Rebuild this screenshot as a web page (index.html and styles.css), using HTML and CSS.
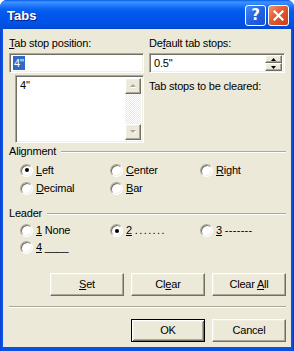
FILE: index.html
```html
<!DOCTYPE html>
<html>
<head>
<meta charset="utf-8">
<link rel="stylesheet" href="styles.css">
</head>
<body>
<div class="window">
  <div class="titlebar">
    <span class="title">Tabs</span>
    <div class="tb-buttons">
      <div class="tb-btn help">?</div>
      <div class="tb-btn close">
        <svg width="11" height="11" viewBox="0 0 11 11"><path d="M1.5 1.5 L9.5 9.5 M9.5 1.5 L1.5 9.5" stroke="#fff" stroke-width="2.2" stroke-linecap="square" fill="none"/></svg>
      </div>
    </div>
  </div>
  <div class="client">
    <div class="top">
      <div class="col">
        <div class="lbl"><u>T</u>ab stop position:</div>
        <div class="field sunken"><span class="sel">4"</span></div>
        <div class="listbox sunken">
          <div class="items">4"</div>
          <div class="vscroll">
            <div class="sbtn raised"><svg width="7" height="5" viewBox="0 0 7 5"><path d="M1 4 L4 1 L7 4 Z" fill="#fff"/><path d="M0 3 L3 0 L6 3 Z" fill="#ACA899"/></svg></div>
            <div class="track"></div>
            <div class="sbtn raised"><svg width="7" height="5" viewBox="0 0 7 5"><path d="M1 1 L7 1 L4 4 Z" fill="#fff"/><path d="M0 0 L6 0 L3 3 Z" fill="#ACA899"/></svg></div>
          </div>
        </div>
      </div>
      <div class="col">
        <div class="lbl">De<u>f</u>ault tab stops:</div>
        <div class="field sunken spin">
          <span class="val">0.5"</span>
          <div class="spinbtns">
            <div class="spbtn raised"><svg width="5" height="3" viewBox="0 0 5 3"><path d="M0 3 L2.5 0 L5 3 Z" fill="#000"/></svg></div>
            <div class="spbtn raised"><svg width="5" height="3" viewBox="0 0 5 3"><path d="M0 0 L5 0 L2.5 3 Z" fill="#000"/></svg></div>
          </div>
        </div>
        <div class="lbl cleared">Tab stops to be cleared:</div>
      </div>
    </div>

    <div class="group align">
      <div class="ghead"><span>Alignment</span><div class="etch"></div></div>
      <div class="radios">
        <div class="radio"><span class="circ on"></span><span><u>L</u>eft</span></div>
        <div class="radio"><span class="circ"></span><span><u>C</u>enter</span></div>
        <div class="radio"><span class="circ"></span><span><u>R</u>ight</span></div>
        <div class="radio"><span class="circ"></span><span><u>D</u>ecimal</span></div>
        <div class="radio"><span class="circ"></span><span><u>B</u>ar</span></div>
      </div>
    </div>

    <div class="group leader">
      <div class="ghead"><span>Leader</span><div class="etch"></div></div>
      <div class="radios">
        <div class="radio"><span class="circ"></span><span><u>1</u> None</span></div>
        <div class="radio"><span class="circ on"></span><span><u>2</u> <span class="dots">.......</span></span></div>
        <div class="radio"><span class="circ"></span><span><u>3</u> <span class="dash">-------</span></span></div>
        <div class="radio"><span class="circ"></span><span><u>4</u> ____</span></div>
      </div>
    </div>

    <div class="btnrow first">
      <div class="btn raised"><span><u>S</u>et</span></div>
      <div class="btn raised"><span>Cl<u>e</u>ar</span></div>
      <div class="btn raised"><span>Clear <u>A</u>ll</span></div>
    </div>
    <div class="sep"></div>
    <div class="btnrow">
      <div class="btn default"><span>OK</span></div>
      <div class="btn raised"><span>Cancel</span></div>
    </div>
  </div>
</div>
</body>
</html>
```
FILE: styles.css
```css
html, body {
  margin: 0;
  padding: 0;
  background: #fff;
}
.window {
  width: 294px;
  height: 351px;
  box-sizing: border-box;
  display: flex;
  flex-direction: column;
  background: linear-gradient(90deg, #0838C6 0, #0A50E4 1px, #0A50E4 293px, #0838C6 293px);
  border-radius: 7px 7px 0 0;
  overflow: hidden;
  font-family: "Liberation Sans", Arial, sans-serif;
  font-size: 11px;
  color: #000;
}
.titlebar {
  height: 29px;
  flex: none;
  display: flex;
  align-items: center;
  padding: 0 5px 0 7px;
  background: linear-gradient(#0A5BEA 0, #3D95FF 2px, #2C86FF 4px, #0B62F0 9px, #0058EE 14px, #0055E8 20px, #0050E0 26px, #0046CC 29px);
}
.title {
  flex: 1;
  color: #fff;
  font-weight: bold;
  font-size: 13px;
  text-shadow: 1px 1px 0 #0A1E80;
  padding-top: 1px;
}
.tb-buttons {
  display: flex;
  gap: 2px;
  padding-top: 1px;
}
.tb-btn {
  width: 21px;
  height: 21px;
  box-sizing: border-box;
  border: 1px solid #fff;
  border-radius: 3px;
  display: flex;
  align-items: center;
  justify-content: center;
  color: #fff;
}
.tb-btn.help {
  background: linear-gradient(135deg, #4A8CF6 0%, #2463E1 50%, #1A4FCF 100%);
  font-weight: bold;
  font-size: 15px;
  font-family: "DejaVu Sans", sans-serif;
}
.tb-btn.close {
  background: linear-gradient(135deg, #F29276 0%, #E25A2E 45%, #C8401B 100%);
}
.client {
  flex: 1;
  margin: 0 3px 4px;
  background: #ECE9D8;
  padding: 8px 5px 0 6px;
  letter-spacing: -0.2px;
}
.top {
  display: grid;
  grid-template-columns: 135px 136px;
  column-gap: 5px;
}
.lbl {
  line-height: 13px;
  height: 13px;
  margin-bottom: 3px;
}
.lbl.cleared {
  margin-top: 7px;
}
.sunken {
  box-sizing: border-box;
  border: 1px solid;
  border-color: #ACA899 #fff #fff #ACA899;
  box-shadow: inset 1px 1px 0 #716F64, inset -1px -1px 0 #F1EFE2;
  background: #fff;
}
.raised {
  box-sizing: border-box;
  border: 1px solid;
  border-color: #fff #716F64 #716F64 #fff;
  box-shadow: inset -1px -1px 0 #ACA899, inset 1px 1px 0 #F1EFE2;
  background: #ECE9D8;
}
.field {
  height: 20px;
  display: flex;
  align-items: center;
  padding: 0 3px;
}
.sel {
  background: #316AC5;
  color: #fff;
  line-height: 14px;
  padding: 0 1px;
}
.listbox {
  margin: 2px 0 0 6px;
  height: 68px;
  display: flex;
  padding: 2px;
}
.items {
  flex: 1;
  padding: 1px 2px;
  line-height: 13px;
}
.vscroll {
  width: 16px;
  display: flex;
  flex-direction: column;
}
.sbtn {
  height: 16px;
  flex: none;
  display: flex;
  align-items: center;
  justify-content: center;
}
.track {
  flex: 1;
  background: repeating-conic-gradient(#fff 0 25%, #ECE9D8 0 50%) 0 0 / 2px 2px;
}
.spin {
  padding-right: 2px;
}
.spin .val {
  flex: 1;
  padding-left: 1px;
}
.spinbtns {
  width: 17px;
  height: 16px;
  display: flex;
  flex-direction: column;
}
.spbtn {
  height: 8px;
  display: flex;
  align-items: center;
  justify-content: center;
}
.group.align {
  margin-top: 2px;
}
.group.leader {
  margin-top: 10px;
}
.ghead {
  display: flex;
  align-items: center;
  height: 13px;
  line-height: 13px;
}
.ghead span {
  padding-right: 5px;
}
.etch {
  flex: 1;
  height: 0;
  border-top: 1px solid #ACA899;
  border-bottom: 1px solid #fff;
  margin-right: 0;
}
.radios {
  display: grid;
  grid-template-columns: 90px 90px 90px;
  grid-auto-rows: 18px;
  padding: 3px 0 0 11px;
}
.leader .radios {
  padding-top: 2px;
  grid-auto-rows: 17px;
}
.radio {
  display: flex;
  align-items: center;
  line-height: 13px;
  white-space: pre;
}
.dots {
  letter-spacing: 1.4px;
}
.dash {
  letter-spacing: 0.3px;
}
.circ {
  width: 13px;
  height: 13px;
  box-sizing: border-box;
  border-radius: 50%;
  border: 1px solid;
  border-color: #ACA899 #fff #fff #ACA899;
  box-shadow: inset 1px 1px 0 #716F64, inset -1px -1px 0 #F1EFE2;
  background: #fff;
  margin-right: 3px;
  display: flex;
  align-items: center;
  justify-content: center;
  flex: none;
}
.circ.on::after {
  content: "";
  width: 4px;
  height: 4px;
  border-radius: 50%;
  background: #000;
}
.btnrow {
  display: flex;
  justify-content: flex-end;
  gap: 7px;
  padding-right: 0;
}
.btnrow.first {
  margin-top: 17px;
}
.btn {
  width: 74px;
  height: 23px;
  display: flex;
  align-items: center;
  justify-content: center;
  line-height: 13px;
  white-space: pre;
}
.btn.default {
  box-sizing: border-box;
  border: 1px solid #000;
  background: #ECE9D8;
  box-shadow: inset 1px 1px 0 #fff, inset -1px -1px 0 #716F64, inset 2px 2px 0 #F1EFE2, inset -2px -2px 0 #ACA899;
}
.sep {
  margin: 10px 0 11px;
  border-top: 1px solid #ACA899;
  border-bottom: 1px solid #fff;
}
```
